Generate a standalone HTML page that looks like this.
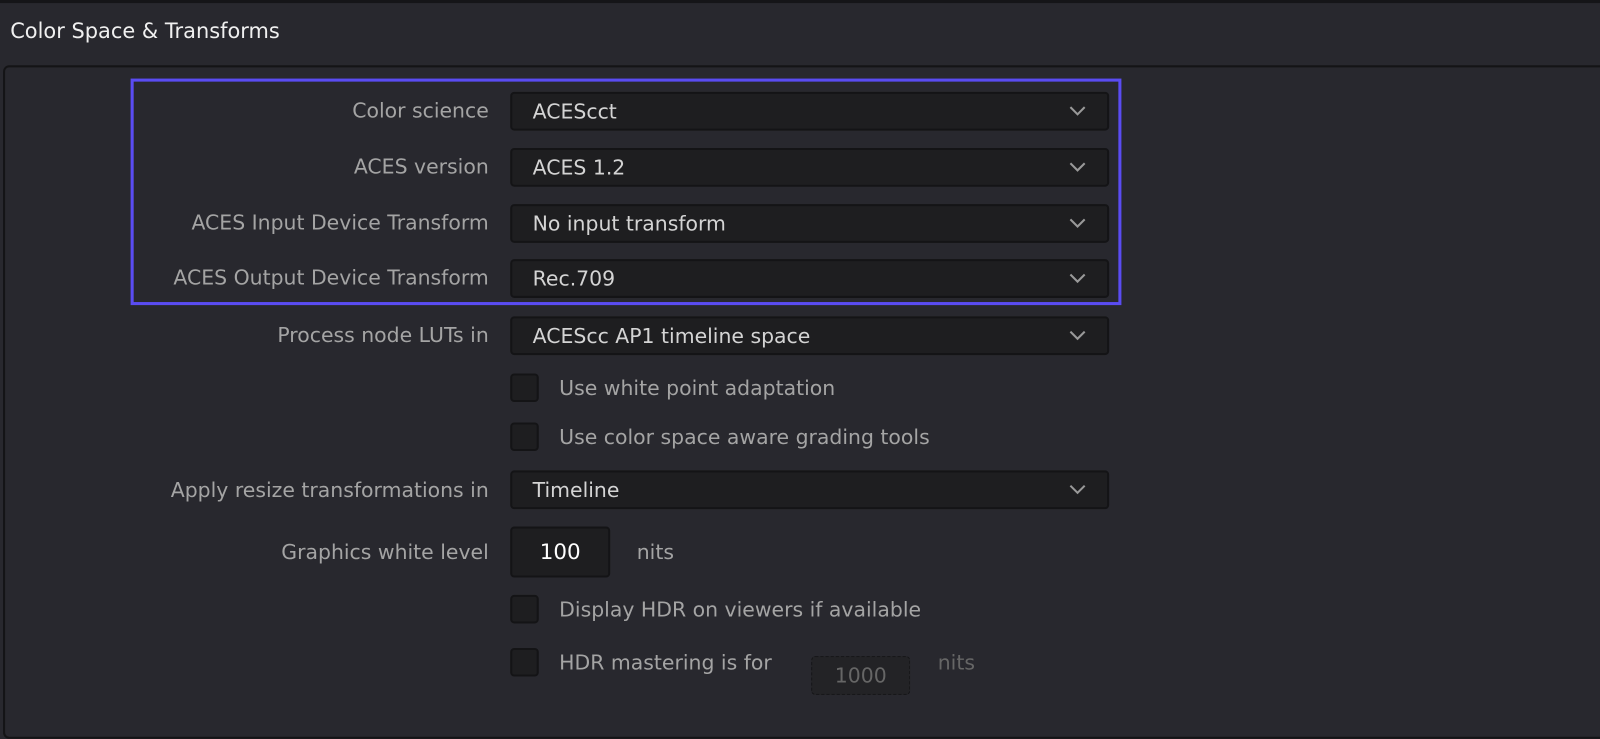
<!DOCTYPE html>
<html><head><style>
body{margin:0;width:1600px;height:706px;background:#28282e;font-family:"DejaVu Sans","Liberation Sans",sans-serif;position:relative;overflow:hidden}
#w{position:absolute;left:0;top:0;width:1568px;height:692px;transform:scale(1.0204);transform-origin:0 0}
.top{position:absolute;left:0;top:0;width:1600px;height:3px;background:#151518}
.title{position:absolute;left:10px;top:18px;font-size:20.5px;color:#f0f0f0}
.panel{position:absolute;left:3px;top:64px;width:1610px;height:660px;border:2px solid #141416;border-radius:6px;box-sizing:border-box}
.lbl{position:absolute;right:1089px;font-size:20px;color:#a4a4a4;white-space:nowrap;height:38px;line-height:38px}
.dd{position:absolute;left:500px;width:587px;height:38px;background:#1e1e20;border:2px solid #141416;border-radius:4px;box-sizing:border-box;color:#d4d4d4;font-size:20px;line-height:34px;padding-left:20px}
.dd svg{position:absolute;right:20px;top:11px}
.cb{position:absolute;left:500px;width:28px;height:28px;background:#1e1e20;border:2px solid #141416;border-radius:4px;box-sizing:border-box}
.ct{position:absolute;left:548px;font-size:20px;color:#a4a4a4;white-space:nowrap;height:38px;line-height:38px}
.box{position:absolute;left:128px;top:77px;width:971px;height:222px;border:3px solid #5a4cf2;box-sizing:border-box}
</style></head><body><div id="w">
<div class="top"></div>
<div class="title">Color Space &amp; Transforms</div>
<div class="panel"></div>
<div class="box"></div>

<div class="lbl" style="top:89px">Color science</div>
<div class="dd" style="top:90px">ACEScct<svg width="18" height="12"><path d="M2 2L9 9L16 2" stroke="#999" stroke-width="2" fill="none"/></svg></div>
<div class="lbl" style="top:144px">ACES version</div>
<div class="dd" style="top:145px">ACES 1.2<svg width="18" height="12"><path d="M2 2L9 9L16 2" stroke="#999" stroke-width="2" fill="none"/></svg></div>
<div class="lbl" style="top:199px">ACES Input Device Transform</div>
<div class="dd" style="top:200px">No input transform<svg width="18" height="12"><path d="M2 2L9 9L16 2" stroke="#999" stroke-width="2" fill="none"/></svg></div>
<div class="lbl" style="top:253px">ACES Output Device Transform</div>
<div class="dd" style="top:254px">Rec.709<svg width="18" height="12"><path d="M2 2L9 9L16 2" stroke="#999" stroke-width="2" fill="none"/></svg></div>
<div class="lbl" style="top:309px">Process node LUTs in</div>
<div class="dd" style="top:310px">ACEScc AP1 timeline space<svg width="18" height="12"><path d="M2 2L9 9L16 2" stroke="#999" stroke-width="2" fill="none"/></svg></div>

<div class="cb" style="top:366px"></div><div class="ct" style="top:361px">Use white point adaptation</div>
<div class="cb" style="top:414px"></div><div class="ct" style="top:409px">Use color space aware grading tools</div>

<div class="lbl" style="top:461px">Apply resize transformations in</div>
<div class="dd" style="top:461px">Timeline<svg width="18" height="12"><path d="M2 2L9 9L16 2" stroke="#999" stroke-width="2" fill="none"/></svg></div>

<div class="lbl" style="top:522px">Graphics white level</div>
<div style="position:absolute;left:500px;top:516px;width:98px;height:50px;background:#1e1e20;border:2px solid #141416;border-radius:4px;box-sizing:border-box;color:#fff;font-size:21px;text-align:center;line-height:46px">100</div>
<div class="ct" style="left:624px;top:522px">nits</div>

<div class="cb" style="top:583px"></div><div class="ct" style="top:578px">Display HDR on viewers if available</div>
<div class="cb" style="top:635px"></div><div class="ct" style="top:630px">HDR mastering is for</div>
<div style="position:absolute;left:795px;top:643px;width:97px;height:38px;background:#232326;border:1px dashed #151517;border-radius:4px;box-sizing:border-box;color:#666;font-size:20px;text-align:center;line-height:36px">1000</div>
<div class="ct" style="left:919px;top:630px;color:#666">nits</div>
</div></body></html>
